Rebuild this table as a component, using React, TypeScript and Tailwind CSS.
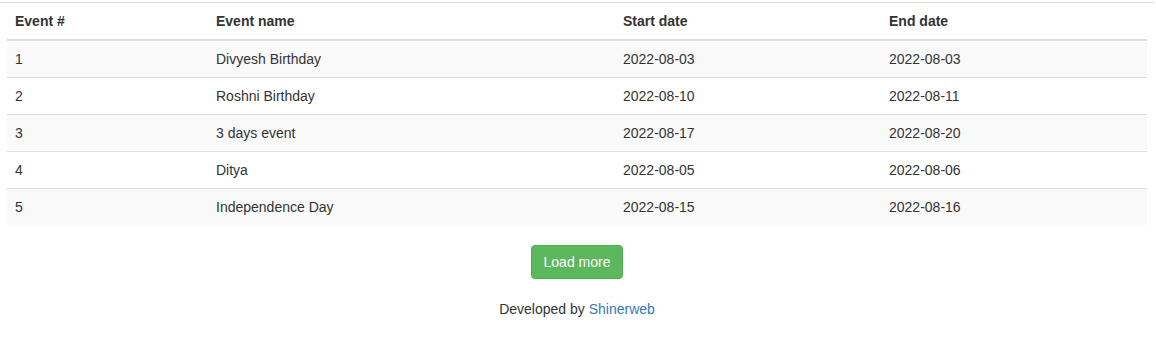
export default function App() {
  const events = [
    { id: 1, name: "Divyesh Birthday", start: "2022-08-03", end: "2022-08-03" },
    { id: 2, name: "Roshni Birthday", start: "2022-08-10", end: "2022-08-11" },
    { id: 3, name: "3 days event", start: "2022-08-17", end: "2022-08-20" },
    { id: 4, name: "Ditya", start: "2022-08-05", end: "2022-08-06" },
    { id: 5, name: "Independence Day", start: "2022-08-15", end: "2022-08-16" },
  ];

  return (
    <div className="bg-white text-[14px] leading-[20px] text-[#333] font-['Liberation_Sans',Arial,sans-serif] min-h-[352px]">
      <div className="pt-[2px]">
        <div className="border-t border-[#ddd] mr-[2px]" />
      </div>
      <div className="ml-[7px] w-[1140px]">
        <table className="w-full border-collapse">
          <thead>
            <tr>
              <th className="w-[201px] text-left font-bold p-[8px] border-b-2 border-[#ddd]">Event #</th>
              <th className="w-[407px] text-left font-bold p-[8px] border-b-2 border-[#ddd]">Event name</th>
              <th className="w-[266px] text-left font-bold p-[8px] border-b-2 border-[#ddd]">Start date</th>
              <th className="w-[266px] text-left font-bold p-[8px] border-b-2 border-[#ddd]">End date</th>
            </tr>
          </thead>
          <tbody>
            {events.map((e, i) => (
              <tr key={e.id} className={i % 2 === 0 ? "bg-[#f9f9f9]" : "bg-white"}>
                <td className={`p-[8px] ${i > 0 ? "border-t border-[#ddd]" : ""}`}>{e.id}</td>
                <td className={`p-[8px] ${i > 0 ? "border-t border-[#ddd]" : ""}`}>{e.name}</td>
                <td className={`p-[8px] ${i > 0 ? "border-t border-[#ddd]" : ""}`}>{e.start}</td>
                <td className={`p-[8px] ${i > 0 ? "border-t border-[#ddd]" : ""}`}>{e.end}</td>
              </tr>
            ))}
          </tbody>
        </table>
        <div className="mt-[20px] flex justify-center">
          <button className="h-[34px] px-[12px] py-[6px] rounded-[4px] border border-[#4cae4c] bg-[#5cb85c] text-white text-[14px] leading-[20px]">
            Load more
          </button>
        </div>
        <p className="mt-[20px] text-center">
          Developed by <a className="text-[#337ab7]" href="#">Shinerweb</a>
        </p>
      </div>
    </div>
  );
}
